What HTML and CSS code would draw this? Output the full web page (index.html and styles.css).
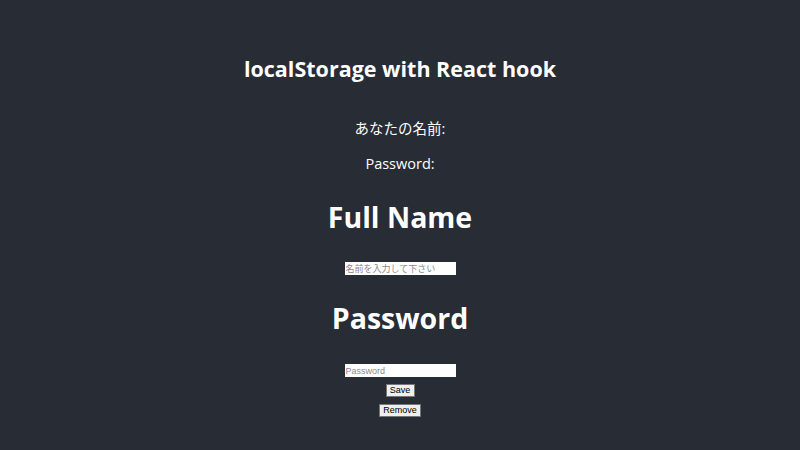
FILE: index.html
```html
<!DOCTYPE html>
<html lang="ja">
<head>
<meta charset="utf-8">
<title>localStorage with React hook</title>
<link rel="stylesheet" href="styles.css">
</head>
<body>
<div class="app">
  <h2 class="title">localStorage with React hook</h2>
  <p class="info info-name">あなたの名前:</p>
  <p class="info info-pass">Password:</p>
  <h1 class="heading heading-name">Full Name</h1>
  <input class="field field-name" type="text" placeholder="名前を入力して下さい">
  <h1 class="heading heading-pass">Password</h1>
  <input class="field field-pass" type="password" placeholder="Password">
  <button class="btn btn-save">Save</button>
  <button class="btn btn-remove">Remove</button>
</div>
</body>
</html>
```
FILE: styles.css
```css
html, body {
  margin: 0;
  padding: 0;
  background: #282c34;
  height: 100%;
}
.app {
  display: flex;
  flex-direction: column;
  align-items: center;
  color: #ffffff;
  font-family: "Open Sans", "Noto Sans", "Noto Sans CJK JP", sans-serif;
  padding-top: 53px;
}
.title {
  margin: 0;
  font-size: 21.5px;
  font-weight: 700;
  line-height: 32px;
}
.info {
  margin: 0;
  font-size: 14.5px;
  line-height: 20px;
  font-family: "Open Sans", "Noto Sans CJK JP", sans-serif;
}
.info-name { margin-top: 34px; }
.info-pass { margin-top: 15px; }
.heading {
  margin: 0;
  font-size: 28.5px;
  font-weight: 700;
  line-height: 40px;
}
.heading-name { margin-top: 23px; }
.heading-pass { margin-top: 23px; }
.field {
  box-sizing: border-box;
  width: 111px;
  height: 13px;
  padding: 0 1px;
  border: none;
  background: #ffffff;
  font-family: "Liberation Sans", "Noto Sans CJK JP", sans-serif;
  font-size: 9px;
  color: #000;
  outline: none;
}
.field::placeholder { color: #8a8a8a; }
.field-name { margin-top: 25px; }
.field-pass { margin-top: 26px; }
.btn {
  box-sizing: border-box;
  height: 13px;
  padding: 0 3px;
  border: 1px solid #767676;
  background: #efefef;
  font-family: "Liberation Sans", sans-serif;
  font-size: 9px;
  font-weight: 400;
  line-height: 11px;
  color: #000;
}
.btn-save { margin-top: 7px; width: 29px; }
.btn-remove { margin-top: 7px; width: 42px; }
```
